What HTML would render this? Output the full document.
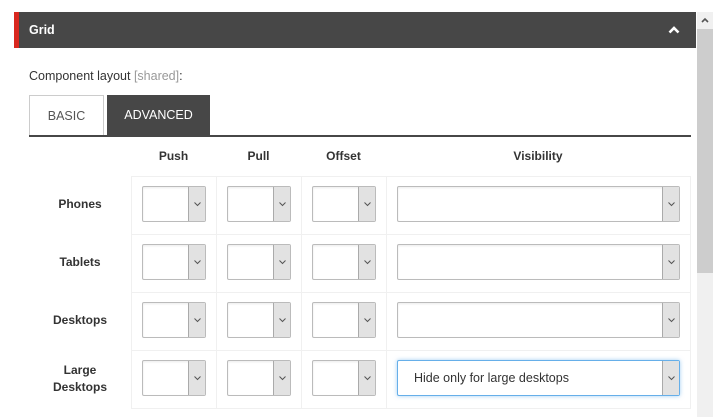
<!DOCTYPE html>
<html><head><style>
*{box-sizing:border-box;margin:0;padding:0}
body{width:716px;height:417px;background:#fff;font-family:"Liberation Sans",sans-serif;font-size:12.5px;color:#333;position:relative;overflow:hidden}
.hdr{position:absolute;left:14px;top:12px;width:682px;height:36px;background:#474747;border-left:5px solid #d9281f;color:#fff;font-weight:bold;font-size:12.5px;line-height:36px;padding-left:10px}
.sb{position:absolute;left:697px;top:12px;width:16px;height:405px;background:#f0f0f0}
.thumb{position:absolute;left:697px;top:29px;width:16px;height:244px;background:#cdcdcd}
.lbl{position:absolute;left:29px;top:69px}
.tab{position:absolute;top:95px;height:41px;line-height:41px;text-align:center;font-size:12.5px}
.line{position:absolute;left:29px;top:135px;width:662px;height:2px;background:#474747}
.th{position:absolute;top:149px;font-weight:bold;text-align:center;font-size:12px}
.rl{position:absolute;left:29px;width:102px;font-weight:bold;text-align:center;line-height:17px;font-size:12px}
.cell{position:absolute;border:1px solid #f0f0f0}
.sel{position:absolute;height:36px;border:1px solid #bbb;border-radius:2px;background:#fff;box-shadow:inset 0 1px 2px rgba(0,0,0,.08)}
.sel .a{position:absolute;right:0;top:0;width:17px;height:34px;background:#e2e2e2;border-left:1px solid #aaa}
.sel .a svg{position:absolute;left:4px;top:14px}
.sel.f{border-color:#66afe9;box-shadow:0 0 4px rgba(102,175,233,.6)}
</style></head><body>
<div class="hdr">Grid<svg style="position:absolute;right:16px;top:13px" width="12" height="9" viewBox="0 0 12 9"><path d="M1.5 7.5 L6 3 L10.5 7.5" stroke="#fff" stroke-width="2.6" fill="none"/></svg></div>
<div class="sb"><svg style="position:absolute;left:4px;top:5px" width="8" height="6" viewBox="0 0 8 6"><path d="M1 5 L4 2 L7 5" stroke="#555" stroke-width="1.6" fill="none"/></svg></div>
<div class="thumb"></div>
<div class="lbl">Component layout <span style="color:#999">[shared]</span>:</div>
<div class="tab" style="left:29px;width:75px;border:1px solid #ccc;border-bottom:none;color:#555">BASIC</div>
<div class="tab" style="left:107px;width:103px;background:#474747;color:#fff">ADVANCED</div>
<div class="line"></div>
<div class="th" style="left:131px;width:85px">Push</div>
<div class="th" style="left:216px;width:85px">Pull</div>
<div class="th" style="left:301px;width:85px">Offset</div>
<div class="th" style="left:386px;width:304px">Visibility</div>
<div class="rl" style="top:196px">Phones</div>
<div class="rl" style="top:254px">Tablets</div>
<div class="rl" style="top:312px">Desktops</div>
<div class="rl" style="top:362px">Large<br>Desktops</div>
<div id="g"></div>
<script>
var g=document.getElementById('g'),h='';
var cols=[[131,85],[216,85],[301,85],[386,304]];
var arrow='<div class="a"><svg width="9" height="6" viewBox="0 0 9 6"><path d="M1.5 1.5 L4.5 4.5 L7.5 1.5" stroke="#555" stroke-width="1" fill="none"/></svg></div>';
for(var r=0;r<4;r++){var y=176+r*58;
for(var c=0;c<4;c++){h+='<div class="cell" style="left:'+cols[c][0]+'px;top:'+y+'px;width:'+(cols[c][1]+1)+'px;height:59px"></div>';}
for(var c=0;c<3;c++){h+='<div class="sel" style="left:'+(cols[c][0]+11)+'px;top:'+(y+10)+'px;width:64px">'+arrow+'</div>';}
h+='<div class="sel'+(r==3?' f':'')+'" style="left:397px;top:'+(y+10)+'px;width:283px">'+(r==3?'<span style="position:absolute;left:16px;top:10px;color:#333">Hide only for large desktops</span>':'')+arrow+'</div>';}
g.innerHTML=h;
</script>
</body></html>
